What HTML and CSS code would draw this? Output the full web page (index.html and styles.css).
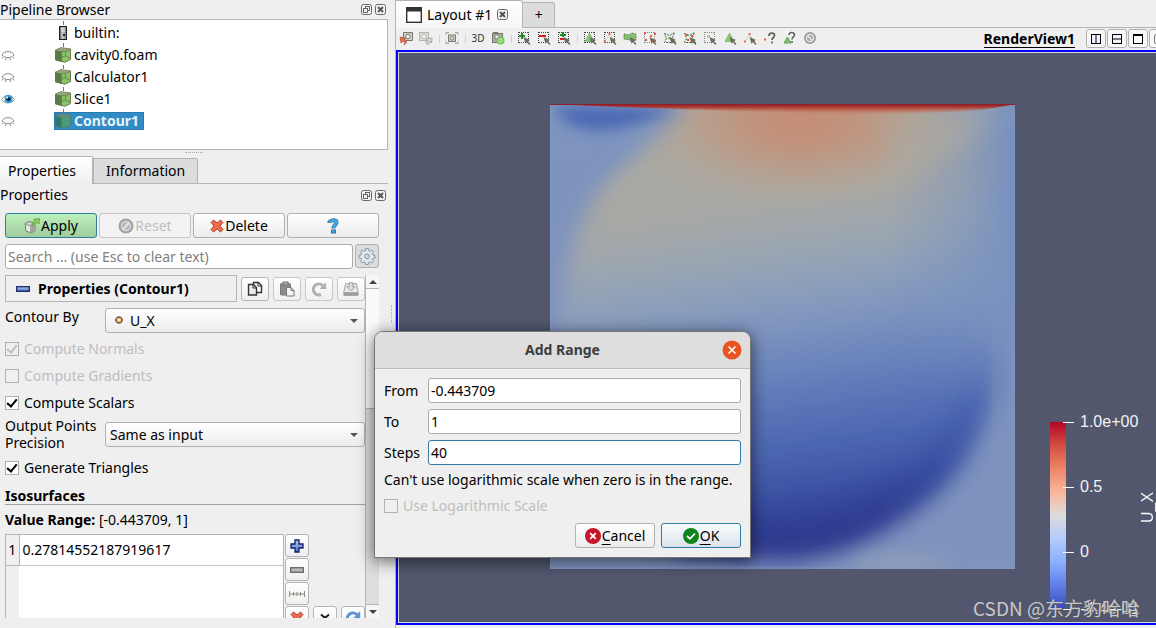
FILE: index.html
```html
<!DOCTYPE html>
<html lang="en">
<head>
<meta charset="utf-8">
<title>ParaView - Add Range</title>
<link rel="stylesheet" href="styles.css">
</head>
<body>
<svg class="defs" width="0" height="0" aria-hidden="true">
  <defs>
    <linearGradient id="steel" x1="0" x2="1"><stop offset="0" stop-color="#555"/><stop offset=".4" stop-color="#ccc"/><stop offset="1" stop-color="#777"/></linearGradient>
    <linearGradient id="blueFill" x1="0" y1="0" x2="0" y2="1"><stop offset="0" stop-color="#b4c6f0"/><stop offset="1" stop-color="#4a6ecb"/></linearGradient>
    <symbol id="i-float" viewBox="0 0 11 11"><rect x=".5" y=".5" width="10" height="10" rx="2" fill="#f4f4f4" stroke="#666"/><rect x="4.5" y="2.5" width="4" height="4" fill="none" stroke="#666"/><rect x="2.5" y="4.500" width="4" height="4" fill="#f4f4f4" stroke="#666"/></symbol>
    <symbol id="i-close" viewBox="0 0 11 11"><rect x=".5" y=".5" width="10" height="10" rx="2" fill="#f4f4f4" stroke="#666"/><path d="M3 3l5 5M8 3l-5 5" stroke="#555" stroke-width="2"/></symbol>
    <symbol id="i-server" viewBox="0 0 16 16"><rect x="4.500" y="1.500" width="7" height="13" fill="url(#steel)" stroke="#222"/><path d="M6 4h4M6 6h4" stroke="#eee"/><rect x="8" y="9" width="2" height="2" fill="#222"/></symbol>
    <symbol id="i-cube" viewBox="0 0 16 16"><path d="M.5 3L6 .7l9.500 1.300v10.500L10 15.300.5 13z" fill="#89c269" stroke="#6e7a52"/><path d="M.5 3l6 1.700v10L.5 13z" fill="#5b7b46"/><path d="M.5 3l6-2.300 9 1.500-5 2.500z" fill="#97a17b"/><path d="M6.500 4.700h4l5-2.500M6.500 4.700v9.500M7 10l3.500-1 4.500 2M10.500 5v4" stroke="#667a4b" stroke-width=".8" fill="none"/></symbol>
    <symbol id="i-cube-sel" viewBox="0 0 16 16"><path d="M.5 3L6 .7l9.500 1.300v10.500L10 15.300.5 13z" fill="#469b78" stroke="#53786f"/><path d="M.5 3l6 1.700v10L.5 13z" fill="#357865"/><path d="M.5 3l6-2.300 9 1.500-5 2.500z" fill="#648983"/></symbol>
    <symbol id="i-shut" viewBox="0 0 14 12"><path d="M1 6C3 1.500 11 1.500 13 6M1 6c3 3.500 9 3.500 12 0M2 8l-1 1.500M5 9l-.5 2M9 9l.5 2M12 8l1 1.500" fill="none" stroke="#888"/></symbol>
    <symbol id="i-eye" viewBox="0 0 14 12"><path d="M.5 6.500C4 1 10 1 13.500 6.500 10 11 4 11 .5 6.500z" fill="#fff" stroke="#8a8f92"/><circle cx="7.500" cy="6" r="4" fill="#2a9ddb"/><circle cx="7.500" cy="6" r="2" fill="#0a1a2a"/><circle cx="6.300" cy="4.500" r="1" fill="#fff"/></symbol>
    <symbol id="i-apply" viewBox="0 0 16 16"><path d="M1 5.500L5 3.500l6 1.500v7.500L7 15l-5-2z" fill="#cfd3c6" stroke="#777d70"/><path d="M1 5.500l5 1.500 5-2v7.500L6.500 15z" fill="#a3a79b"/><path d="M2 7l4 1.500v5l-3.500-1z" fill="#e8eae2"/><path d="M8 8c0-3 1-4.500 3-5L9.500 1.500l6-1L15 6l-1.500-1.500C11.500 5 10.500 6 8 8z" fill="#8fd05c" stroke="#5a9136" stroke-width=".7"/></symbol>
    <symbol id="i-forbid" viewBox="0 0 16 16"><circle cx="8" cy="8" r="7.500" fill="#a2a2a2"/><circle cx="8" cy="8" r="4.500" fill="#b5b5b5" stroke="#dcdcdc" stroke-width="1.300"/><path d="M5 11l6-6" stroke="#e6e6e6" stroke-width="2"/></symbol>
    <symbol id="i-redx" viewBox="0 0 14 14"><path d="M3.500 1L7 4l3.500-3L13 3.500 10 7l3 3.500-2.500 2.500L7 10l-3.500 3L1 10.500 4 7 1 3.500z" fill="#f4694a" stroke="#a74635"/></symbol>
    <symbol id="i-help" viewBox="0 0 12 16"><path d="M2.500 5V4C4.500 1.500 9.500 1.500 9.500 4.500c0 2.500-3.200 2.500-3.200 6" fill="none" stroke="#4d6f88" stroke-width="4"/><path d="M2.500 4.500C4.500 1.500 9.500 1.500 9.500 4.500c0 2.500-3.200 2.500-3.200 5.500" fill="none" stroke="#3aa9ee" stroke-width="2.500"/><rect x="4.500" y="12" width="4" height="3" fill="#3aa9ee" stroke="#4d6f88"/></symbol>
    <symbol id="i-gear" viewBox="0 0 18 18"><path d="M7.700 1.500h2.600l.4 2.200 1.300.6 1.900-1.300 1.700 1.900-1.300 1.800.6 1.300 2.100.4v2.400l-2.200.5-.6 1.200 1.300 1.900-1.800 1.700-1.800-1.200-1.300.5-.4 2.100H7.600l-.4-2.200-1.300-.5-1.800 1.200-1.700-1.700 1.200-1.900-.6-1.200-2-.5V8.300l2.100-.4.5-1.300L2.500 4.700 4.300 3l1.800 1.200 1.200-.5z" fill="#dfe8ef" stroke="#7f8b97" stroke-width=".9"/><circle cx="9" cy="9.300" r="2.400" fill="#cfd6dc" stroke="#8793a0"/></symbol>
    <symbol id="i-copy" viewBox="0 0 16 16"><path d="M6.500 1.500h5l3 3v7h-8z" fill="#fff" stroke="#333" stroke-width="1.400"/><path d="M11 1.500v3.500h3.500" fill="none" stroke="#333"/><path d="M1.500 3.500h5l3 3v7.500h-8z" fill="#e9e9e9" stroke="#333" stroke-width="1.400"/><path d="M6 3.500v3.500h3.500" fill="none" stroke="#333"/></symbol>
    <symbol id="i-paste" viewBox="0 0 16 16"><rect x="1.500" y="2.500" width="10" height="11.500" rx="1" fill="#8d8d8d" stroke="#777"/><rect x="4" y="1" width="5" height="3" fill="#aaa" stroke="#777"/><path d="M7.500 6.500h4.500l3 3v5.500h-7.500z" fill="#f6f6f6" stroke="#777"/><path d="M12 6.500v3h3" fill="none" stroke="#777"/></symbol>
    <symbol id="i-redo" viewBox="0 0 16 16"><path d="M12.500 5.500A5.500 5.500 0 1 0 10 13.500" fill="none" stroke="currentColor" stroke-width="3"/><path d="M15.200 1v7H8.500z" fill="currentColor"/></symbol>
    <symbol id="i-save" viewBox="0 0 18 16"><path d="M3 2h12l2 9v4H1v-4z" fill="#e8e8e8" stroke="#999"/><rect x="1" y="11.500" width="16" height="4" fill="#9d9d9d"/><path d="M7 1h4v4.500h2.500L9 10 4.500 5.500H7z" fill="#ddd" stroke="#999"/></symbol>
    <symbol id="i-plus" viewBox="0 0 14 14"><path d="M5 1h4v4h4v4H9v4H5V9H1V5h4z" fill="url(#blueFill)" stroke="#10206a" stroke-width="1.300"/></symbol>
    <symbol id="i-minus" viewBox="0 0 14 6"><rect x=".7" y=".7" width="12.600" height="4.600" fill="#b9b9b9" stroke="#666" stroke-width="1.300"/></symbol>
    <symbol id="i-fold" viewBox="0 0 14 6"><rect x=".7" y=".7" width="12.600" height="4.600" fill="url(#blueFill)" stroke="#17266b" stroke-width="1.300"/></symbol>
    <symbol id="i-range" viewBox="0 0 16 8"><path d="M.5 1v6M15.500 1v6M.5 4h15M4.500 2v4M8 2v4M11.500 2v4" fill="none" stroke="#8d8d80"/></symbol>
    <symbol id="i-point" viewBox="0 0 8 8"><path d="M2.500 1h3L7 2.500v3L5.500 7h-3L1 5.500v-3z" fill="#f9b06a" stroke="#2b1c10"/><rect x="3" y="3" width="2" height="2" fill="#fff0dc"/></symbol>
    <symbol id="i-cam" viewBox="0 0 16 16"><path d="M5.500 2.500h9v8h-9z" fill="#cfcfc4" stroke="#77776e"/><circle cx="10" cy="6.500" r="2.200" fill="#fff" stroke="#77776e"/></symbol>
    <symbol id="i-camframe" viewBox="0 0 16 16"><path d="M2 5V2.500h3M11 2.500h3V5M14 11v2.500h-3M5 13.500H2V11" fill="none" stroke="#a0a090"/><rect x="4.500" y="5" width="7" height="6.500" fill="#d3d3ca" stroke="#7c7c70"/><circle cx="8" cy="8.500" r="1.700" fill="#eee" stroke="#77776e"/></symbol>
    <symbol id="i-dots" viewBox="0 0 16 16"><path d="M2.500 2v11M12.500 2v11M3 2.500h10M3 12.500h10" fill="none" stroke="#444" stroke-dasharray="1 1"/></symbol>
    <symbol id="i-cursor" viewBox="0 0 16 16"><path d="M7.500 7l6.500 3-2 1 2.500 3-1.300 1L11 12l-1.500 1.700z" fill="#6d6b5c"/></symbol>
    <symbol id="i-tri" viewBox="0 0 16 16"><path d="M7.500 3l4.500 8.500H3z" fill="#86cb70" stroke="#7fae70" stroke-width=".7"/></symbol>
    <symbol id="i-tripts" viewBox="0 0 16 16"><path d="M7.500 4l-4.500 7.500M7.500 4l4.500 7.500" stroke="#b9b9ac" stroke-dasharray="1 1"/><path d="M6.500 3h2v2h-2zM2 10.500h2v2H2zM11 10.500h2v2h-2z" fill="#ef6a50"/></symbol>
    <symbol id="i-poly" viewBox="0 0 16 16"><path d="M2.500 3.500l5 2 5-3-2 5 3 5h-11l2-4z" fill="none" stroke="#3f6b3f" stroke-dasharray="2 1"/></symbol>
  </defs>
</svg>

<div class="app">
  <aside class="sidebar">
    <header class="dock-title">
      <span>Pipeline Browser</span>
      <span class="dock-tools"><button aria-label="Float"><svg><use href="#i-float"/></svg></button><button aria-label="Close"><svg><use href="#i-close"/></svg></button></span>
    </header>
    <ul class="tree">
      <li><span class="vis"></span><span class="node"><svg><use href="#i-server"/></svg>builtin:</span></li>
      <li><svg class="vis"><use href="#i-shut"/></svg><span class="node"><svg><use href="#i-cube"/></svg>cavity0.foam</span></li>
      <li><svg class="vis"><use href="#i-shut"/></svg><span class="node"><svg><use href="#i-cube"/></svg>Calculator1</span></li>
      <li><svg class="vis"><use href="#i-eye"/></svg><span class="node"><svg><use href="#i-cube"/></svg>Slice1</span></li>
      <li><svg class="vis"><use href="#i-shut"/></svg><span class="node selected"><svg><use href="#i-cube-sel"/></svg>Contour1</span></li>
    </ul>
    <div class="grip"></div>
    <nav class="dock-tabs">
      <button class="tab active">Properties</button><button class="tab">Information</button>
    </nav>
    <header class="dock-title second">
      <span>Properties</span>
      <span class="dock-tools"><button aria-label="Float"><svg><use href="#i-float"/></svg></button><button aria-label="Close"><svg><use href="#i-close"/></svg></button></span>
    </header>
    <div class="actions">
      <button class="btn apply"><svg><use href="#i-apply"/></svg>Apply</button>
      <button class="btn" disabled><svg><use href="#i-forbid"/></svg>Reset</button>
      <button class="btn"><svg class="s14"><use href="#i-redx"/></svg>Delete</button>
      <button class="btn" aria-label="Help"><svg><use href="#i-help"/></svg></button>
    </div>
    <div class="search">
      <input type="text" placeholder="Search ... (use Esc to clear text)" aria-label="Search">
      <button class="gear" aria-label="Advanced"><svg><use href="#i-gear"/></svg></button>
    </div>
    <div class="scroll">
      <div class="props">
        <div class="section-row">
          <button class="section"><svg><use href="#i-fold"/></svg>Properties (Contour1)</button>
          <button class="sq" aria-label="Copy"><svg><use href="#i-copy"/></svg></button>
          <button class="sq" aria-label="Paste" disabled><svg><use href="#i-paste"/></svg></button>
          <button class="sq" aria-label="Restore" disabled><svg><use href="#i-redo"/></svg></button>
          <button class="sq" aria-label="Save" disabled><svg><use href="#i-save"/></svg></button>
        </div>
        <div class="field first">
          <label for="by">Contour By</label>
          <span class="combo point"><select id="by"><option>U_X</option></select><svg><use href="#i-point"/></svg></span>
        </div>
        <label class="check off"><input type="checkbox" checked disabled>Compute Normals</label>
        <label class="check off"><input type="checkbox" disabled>Compute Gradients</label>
        <label class="check"><input type="checkbox" checked>Compute Scalars</label>
        <div class="field">
          <label for="prec">Output Points Precision</label>
          <span class="combo"><select id="prec"><option>Same as input</option></select></span>
        </div>
        <label class="check last"><input type="checkbox" checked>Generate Triangles</label>
        <h3>Isosurfaces</h3>
        <p class="range"><b>Value Range:</b> [-0.443709, 1]</p>
        <div class="values">
          <div class="table-box">
            <table><tbody><tr><th scope="row">1</th><td>0.27814552187919617</td></tr></tbody></table>
          </div>
          <div class="value-tools">
            <button class="sm" aria-label="Add value"><svg class="s14"><use href="#i-plus"/></svg></button>
            <button class="sm" aria-label="Remove value" disabled><svg class="s14"><use href="#i-minus"/></svg></button>
            <button class="sm" aria-label="Add range"><svg><use href="#i-range"/></svg></button>
            <div class="last-tools">
              <button class="sm" aria-label="Remove all"><svg class="s14"><use href="#i-redx"/></svg></button>
              <button class="sm" aria-label="Menu"><svg viewBox="0 0 16 16"><path d="M4 4.500l4 3.500 4-3.500M5 12l3-4 3 4" fill="none" stroke="#222" stroke-width="2"/></svg></button>
              <button class="sm blue" aria-label="Reset values"><svg><use href="#i-redo"/></svg></button>
            </div>
          </div>
        </div>
      </div>
      <div class="scrollbar"><span class="up"></span><span class="thumb"></span><span class="track"></span><span class="down"></span></div>
    </div>
  </aside>
  <div class="splitter"></div>

  <main class="views">
    <nav class="layout-tabs">
      <button class="ltab active"><svg class="win" viewBox="0 0 16 16"><rect x=".7" y=".7" width="14.600" height="14.600" fill="#fff" stroke="#333" stroke-width="1.400"/><rect width="16" height="4.500" fill="#333"/></svg>Layout #1<svg class="x"><use href="#i-close"/></svg></button><button class="ltab add">+</button>
    </nav>
    <div class="toolbar">
      <button aria-label="Undo camera"><svg><use href="#i-cam"/><path d="M2 7l6 1-1.500 1.500C9 10 9.500 13 6 15c1-2.500.5-3.500-1.500-3.500L3 13z" fill="#e2704f" stroke="#a9472d" stroke-width=".6"/></svg></button>
      <button aria-label="Redo camera"><svg><g opacity=".5"><use href="#i-cam" x="-4"/><path d="M14 8l-6 1 1.500 1.500C7 11 7.500 13 10 15c0-2 0-3 2-3l1.500 1z" fill="#bbb" stroke="#666"/></g></svg></button>
      <i class="sep"></i>
      <button aria-label="Capture"><svg><use href="#i-camframe"/></svg></button>
      <i class="sep"></i>
      <button class="t3d">3D</button>
      <button aria-label="Adjust camera"><svg><rect x="2.500" y="3.500" width="10" height="9" fill="#a9ac9e" stroke="#77776a"/><path d="M3 2.500h5" stroke="#77776a"/><circle cx="7" cy="7" r="2.300" fill="#eee" stroke="#777"/><circle cx="10.500" cy="10.500" r="4" fill="#72c653"/><circle cx="10.500" cy="10.500" r="1.700" fill="none" stroke="#e9f7e2"/></svg></button>
      <i class="sep"></i>
      <button aria-label="Add selection"><svg><use href="#i-dots"/><path d="M3 6h6M6 3v6" stroke="#1d8a26" stroke-width="2"/><use href="#i-cursor"/></svg></button>
      <button aria-label="Subtract selection"><svg><use href="#i-dots"/><path d="M3 6h7" stroke="#e01818" stroke-width="2"/><use href="#i-cursor"/></svg></button>
      <button aria-label="Toggle selection"><svg><use href="#i-dots"/><path d="M4 5h6M7 2v5" stroke="#1d8a26" stroke-width="2"/><path d="M4 9h6" stroke="#e01818" stroke-width="2"/><use href="#i-cursor"/></svg></button>
      <i class="sep"></i>
      <button aria-label="Select cells"><svg><use href="#i-dots"/><use href="#i-tri"/><use href="#i-cursor"/></svg></button>
      <button aria-label="Select points"><svg><use href="#i-dots"/><use href="#i-tripts"/><use href="#i-cursor"/></svg></button>
      <button aria-label="Select cells through"><svg><path d="M2 4l5 1 3-2 4 1v6l-4 1-2-1-6-1z" fill="#86c26c" stroke="#5c8d50" stroke-dasharray="2 1"/><use href="#i-cursor"/></svg></button>
      <button aria-label="Select points through"><svg><use href="#i-dots" opacity=".6"/><path d="M2 2h2v2H2zM8 5h2v2H8zM3 9h2v2H3zM12 3h2v2h-2zM12 10h2v2h-2z" fill="#ee5a40"/><use href="#i-cursor"/></svg></button>
      <button aria-label="Polygon cells"><svg><use href="#i-poly"/><path d="M5 9l3-3 3 4z" fill="#7fc36a"/><use href="#i-cursor"/></svg></button>
      <button aria-label="Polygon points"><svg><use href="#i-poly"/><path d="M4 4h2v2H4zM9 5h2v2H9zM5 9h2v2H5zM9 10h2v2H9z" fill="#ee4a30"/><use href="#i-cursor"/></svg></button>
      <button aria-label="Select block"><svg><g opacity=".6"><use href="#i-dots"/><path d="M5 5h3v3H5zM8 8h3v3H8z" fill="#8db98a"/></g><use href="#i-cursor"/></svg></button>
      <button aria-label="Interactive cells"><svg><use href="#i-tri"/><use href="#i-cursor"/></svg></button>
      <button aria-label="Interactive points"><svg><use href="#i-tripts"/><use href="#i-cursor"/></svg></button>
      <button class="q" aria-label="Hover points"><svg><path d="M2 8.500h2v2H2z" fill="#ee5a40"/><path d="M7 6c0-4 5.500-3.500 5.500-.5 0 2-2.500 2-2.500 4.500M10 11.500v2" fill="none" stroke="#66665a" stroke-width="1.800"/></svg></button>
      <button class="q" aria-label="Hover cells"><svg><path d="M5.500 7l3.500 6H2z" fill="#7fc36a" stroke="#6d9c5e"/><path d="M7 5c0-3.500 5.500-3 5.500 0 0 2-2.500 2-2.500 4.500M10 11v2" fill="none" stroke="#66665a" stroke-width="1.600"/></svg></button>
      <button aria-label="Clear selection"><svg><circle cx="8" cy="8" r="6" fill="#999"/><circle cx="8" cy="8" r="3.700" fill="#aaa" stroke="#e6e6e6" stroke-width="1.300"/><path d="M5.500 5.500l5 5" stroke="#e6e6e6" stroke-width="1.600"/></svg></button>
      <b class="view-name">RenderView1</b>
      <span class="view-tools">
        <button aria-label="Split horizontally"><svg viewBox="0 0 10 10"><rect x=".5" y=".5" width="9" height="9" fill="#eef2ff" stroke="#000"/><path d="M5 0v10" stroke="#000"/></svg></button>
        <button aria-label="Split vertically"><svg viewBox="0 0 10 10"><rect x=".5" y=".5" width="9" height="9" fill="#eef2ff" stroke="#000"/><path d="M0 5h10" stroke="#000"/></svg></button>
        <button aria-label="Maximize"><svg viewBox="0 0 10 10"><rect x=".5" y=".5" width="9" height="9" fill="#fff" stroke="#000"/><path d="M0 1h10" stroke="#000" stroke-width="2"/></svg></button>
        <button aria-label="Close view"><svg><use href="#i-close"/></svg></button>
      </span>
    </div>
    <section class="render">
      <svg class="plot" viewBox="0 0 464 464">
        <defs>
          <clipPath id="box"><rect width="464" height="464"/></clipPath>
          <linearGradient id="body" gradientUnits="userSpaceOnUse" x1="205" y1="0" x2="265" y2="440">
            <stop offset="0" stop-color="#aaa9a3"/><stop offset=".18" stop-color="#aaa9a3"/><stop offset=".26" stop-color="#a5a8a8"/><stop offset=".33" stop-color="#9ba6b1"/><stop offset=".43" stop-color="#8a9ebb"/><stop offset=".5" stop-color="#7e95bf"/><stop offset=".6" stop-color="#6a84bc"/><stop offset=".7" stop-color="#5872b7"/><stop offset=".8" stop-color="#4862ae"/><stop offset=".9" stop-color="#394c9f"/><stop offset=".98" stop-color="#2e3a8d"/><stop offset="1" stop-color="#2e3a8e"/>
          </linearGradient>
          <linearGradient id="fadeR" x1="0" x2="1"><stop offset="0" stop-color="#7992bf" stop-opacity="0"/><stop offset=".6" stop-color="#7992bf" stop-opacity=".5"/><stop offset="1" stop-color="#7892bf"/></linearGradient>
          <linearGradient id="down" x1="0" x2="0" y1="0" y2="1"><stop offset=".6" stop-color="#fff"/><stop offset="1" stop-color="#000"/></linearGradient>
          <mask id="fadeDown"><rect x="300" width="164" height="300" fill="url(#down)"/></mask>
          <linearGradient id="crescent" gradientUnits="userSpaceOnUse" x1="430" y1="250" x2="350" y2="400"><stop offset="0" stop-color="#3a52a6" stop-opacity="0"/><stop offset=".5" stop-color="#3650a4" stop-opacity=".5"/><stop offset="1" stop-color="#2d3a90" stop-opacity=".6"/></linearGradient>
          <radialGradient id="hot"><stop offset="0" stop-color="#c48d76"/><stop offset=".25" stop-color="#c1927c"/><stop offset=".55" stop-color="#ba9d89" stop-opacity=".85"/><stop offset=".8" stop-color="#b3a597" stop-opacity=".45"/><stop offset="1" stop-color="#aca99f" stop-opacity="0"/></radialGradient>
          <linearGradient id="lid" x1="0" y1="0" x2="0" y2="1"><stop offset="0" stop-color="#921a26"/><stop offset=".3" stop-color="#a8382f"/><stop offset="1" stop-color="#c47a62" stop-opacity="0"/></linearGradient>
          <filter id="b2" filterUnits="userSpaceOnUse" x="-60" y="-60" width="600" height="600"><feGaussianBlur stdDeviation="2"/></filter>
          <filter id="b7" filterUnits="userSpaceOnUse" x="-60" y="-60" width="600" height="600"><feGaussianBlur stdDeviation="7"/></filter>
          <filter id="b11" filterUnits="userSpaceOnUse" x="-60" y="-60" width="600" height="600"><feGaussianBlur stdDeviation="11"/></filter>
        </defs>
        <g clip-path="url(#box)">
          <rect width="464" height="464" fill="#7e93be"/>
          <path d="M150-40L132 10C116 28 102 36 94 41 82 50 72 60 64 68 52 82 46 92 40 102 32 116 26 130 23 143 16 165 12 190 8 240L20 330 60 400 130 450 231 456C260 455 289 448 328 428 350 415 370 402 386 387 404 370 416 352 424 336 438 312 444 290 449 270L456 200V-40z" fill="url(#body)" filter="url(#b11)"/>
          <path d="M436 240C426 300 412 325 397 346 380 368 365 380 347 390 325 405 310 413 289 421 265 428 250 429 180 428" fill="none" stroke="url(#crescent)" stroke-width="28" filter="url(#b11)"/>
          <rect x="340" width="124" height="300" fill="url(#fadeR)" mask="url(#fadeDown)"/>
          <ellipse cx="250" cy="18" rx="175" ry="88" fill="url(#hot)"/>
          <path d="M340 12C380 12 420 10 450 2L436 20C410 46 380 66 340 80z" fill="#abaaa3" opacity=".5" filter="url(#b11)"/>
          <path d="M-20-20H140L122 14C104 32 80 46 56 60L-20 70z" fill="#7e95c0" opacity=".7" filter="url(#b11)"/>
          <path d="M4 4C40 2 90 3 128 6 100 14 84 24 50 26 24 26 12 16 4 4z" fill="#4868b4" filter="url(#b7)"/>
          <ellipse cx="350" cy="458" rx="50" ry="10" fill="#95a4b6" opacity=".55" filter="url(#b7)"/>
          <path d="M0-5C100 2 180 4 240 6S400 10 460-3z" fill="#bf6650" opacity=".9" filter="url(#b2)"/>
          <path d="M0 0H464C430 8 380 10 300 9S80 4 0 0z" fill="url(#lid)"/>
          <path d="M0 .5h464" stroke="#8f1f2c"/>
          <path d="M464 2C460 12 452 24 445 32V464" fill="none" stroke="#7f97bd" stroke-opacity=".25" stroke-width="6" filter="url(#b2)"/>
          <path d="M463 4v459H1V4" fill="none" stroke="#86a0c4" stroke-opacity=".5"/>
        </g>
      </svg>
      <div class="legend">
        <div class="bar"></div>
        <div class="ticks"><span>1.0e+00</span><span>0.5</span><span>0</span><span>-4.4e-01</span></div>
        <div class="axis">U_X</div>
      </div>
      <div class="watermark">CSDN @东方豹哈哈</div>
    </section>
  </main>
</div>

<form class="dialog" role="dialog" aria-labelledby="dlg">
  <header><h2 id="dlg">Add Range</h2><button type="button" class="round" aria-label="Close"><svg viewBox="0 0 20 20"><circle cx="10" cy="10" r="9.500" fill="#e95420"/><path d="M6.500 6.500l7 7M13.500 6.500l-7 7" stroke="#fff" stroke-width="1.500"/></svg></button></header>
  <div class="body">
    <div class="grid">
      <label for="from">From</label><input id="from" type="text" value="-0.443709">
      <label for="to">To</label><input id="to" type="text" value="1">
      <label for="steps">Steps</label><input id="steps" class="focus" type="text" value="40">
    </div>
    <p>Can't use logarithmic scale when zero is in the range.</p>
    <label class="check off"><input type="checkbox" disabled>Use Logarithmic Scale</label>
    <div class="buttons">
      <button type="button" class="btn"><svg viewBox="0 0 16 16"><circle cx="8" cy="8" r="8" fill="#c7162b"/><path d="M5.200 5.200l5.600 5.600M10.800 5.200l-5.600 5.600" stroke="#fff" stroke-width="1.800"/></svg><span><u>C</u>ancel</span></button>
      <button type="button" class="btn ok"><svg viewBox="0 0 16 16"><circle cx="8" cy="8" r="8" fill="#0e8420"/><path d="M4 8l3 2.800L12 5.500" fill="none" stroke="#fff" stroke-width="1.800"/></svg><span><u>O</u>K</span></button>
    </div>
  </div>
</form>
</body>
</html>
```
FILE: styles.css
```css
* { box-sizing: border-box; }
body { margin: 0; background: #efefef; color: #000; font: 14px/18px "Noto Sans", "Open Sans", sans-serif; overflow: hidden; }
button, input, select { font: inherit; color: inherit; margin: 0; padding: 0; }
button { border: 0; background: none; }
svg { width: 16px; height: 16px; flex: none; display: block; }
svg.s14 { width: 14px; height: 14px; }
.defs { position: absolute; width: 0; height: 0; }
.app { display: flex; height: 100vh; }

.sidebar { width: 388px; flex: none; display: flex; flex-direction: column; padding-bottom: 10px; }
.dock-title { display: flex; justify-content: space-between; align-items: center; height: 19px; flex: none; padding-right: 2px; }
.dock-title.second { height: 22px; margin-bottom: 7px; }
.dock-tools { display: flex; gap: 3px; }
.dock-tools svg { width: 11px; height: 11px; }
.tree { list-style: none; margin: 0; padding: 2px 0 0; height: 131px; flex: none; background: #fff; border: 1px solid #b4b4b4; border-left: 0; }
.tree li { display: flex; align-items: center; height: 22px; }
.vis { width: 14px; height: 12px; margin: 0 39px 0 1px; flex: none; }
.node { display: flex; align-items: center; gap: 3px; height: 18px; padding: 0 5px 0 1px; position: relative; }
.node::before { content: ""; position: absolute; left: 9px; top: -3px; height: 4px; border-left: 1px solid #777; }
.node.selected { background: #308cc6; color: #e8f2fa; font-weight: bold; outline: 1px solid #2a7ab0; outline-offset: -1px; }
.grip { height: 6px; flex: none; }
.grip::after { content: ""; display: block; width: 18px; margin: 2px auto 0; border-top: 1px dotted #aaa; }
.dock-tabs { display: flex; align-items: flex-end; height: 28px; flex: none; border-bottom: 1px solid #b4b4b4; }
.tab { height: 25px; padding: 0 12px; background: #dcdcdc; border: 1px solid #b4b4b4; border-bottom: 0; border-radius: 0 2px 0 0; }
.tab.active { height: 28px; margin-bottom: -1px; padding: 0 16px 0 8px; background: linear-gradient(#fff, #efefef); border-left: 0; }
.actions { display: grid; grid-template-columns: repeat(4, 1fr); gap: 2px; padding: 0 9px 0 5px; margin-bottom: 6px; flex: none; }
.btn { display: flex; align-items: center; justify-content: center; gap: 1px; height: 25px; border: 1px solid #b0b0b0; border-radius: 3px; background: linear-gradient(#fff, #ececec); }
.btn:disabled { color: #bebebe; border-color: #c6c6c6; background: #f2f2f2; }
.btn.apply { background: linear-gradient(#bdf0bd, #a0cc9e); border-color: #2e7f9e; }
.search { display: flex; gap: 2px; padding: 0 9px 0 5px; margin-bottom: 6px; flex: none; }
input[type="text"] { height: 25px; min-width: 0; flex: 1; padding: 0 2px; border: 1px solid #ababab; border-radius: 3px; background: #fff; }
input::placeholder { color: #808080; opacity: 1; }
.gear { width: 24px; height: 24px; display: grid; place-items: center; background: #dcdcdc; border: 1px solid #b0b0b0; border-radius: 3px; }
.gear svg { width: 18px; height: 18px; }
.scroll { display: flex; flex: 1; min-height: 0; padding-right: 9px; }
.props { flex: 1; min-width: 0; padding-left: 5px; overflow: hidden; display: flex; flex-direction: column; }
.section-row { display: flex; gap: 4px; align-items: center; flex: none; height: 27px; }
.section { flex: 1; height: 27px; display: flex; align-items: center; gap: 8px; padding-left: 10px; font-weight: bold; border: 1px solid #b4b4b4; white-space: nowrap; }
.section svg { width: 14px; height: 6px; }
.sq { width: 28px; height: 24px; display: grid; place-items: center; border: 1px solid #b4b4b4; border-radius: 3px; background: linear-gradient(#fff, #efefef); color: #b0b0b0; }
.sq:disabled { border-color: #c8c8c8; }
.field { display: grid; grid-template-columns: 100px 1fr; align-items: center; line-height: 17px; flex: none; height: 36px; }
.field.first { height: 31px; margin-bottom: 2px; align-items: end; }
.field.first label { padding-bottom: 8px; }
.combo { position: relative; display: block; height: 25px; }
.combo select { appearance: none; width: 100%; height: 25px; padding: 0 20px 0 4px; border: 1px solid #b0b0b0; border-radius: 3px; background: linear-gradient(#fff, #ececec); }
.combo.point select { padding-left: 24px; }
.combo::after { content: ""; position: absolute; right: 7px; top: 11px; border: 4px solid transparent; border-top-color: #555; border-bottom: 0; }
.combo svg { position: absolute; left: 10px; top: 8px; width: 8px; height: 8px; pointer-events: none; }
.check { display: flex; align-items: center; gap: 5px; height: 27px; flex: none; }
.check.off { color: #bebebe; }
.check input { appearance: none; width: 14px; height: 14px; border: 1px solid #b0b0b0; background: #fff; display: grid; place-items: center; }
.check.off input { background: #efefef; }
.check input:checked::after { content: ""; width: 4px; height: 8px; border: solid currentColor; border-width: 0 2px 2px 0; transform: rotate(40deg); margin-bottom: 2px; }
.check.last { height: 31px; }
h3 { font: inherit; font-weight: bold; margin: 0; padding-top: 4px; height: 22px; border-bottom: 1px solid #a0a0a0; flex: none; }
.range { margin: 0; height: 29px; line-height: 30px; flex: none; }
.values { display: flex; flex: 1; min-height: 0; gap: 1px; }
.table-box { width: 279px; border: 1px solid #b4b4b4; border-bottom: 0; background: linear-gradient(to right, #efefef 13px, #fff 13px); }
table { border-collapse: collapse; width: 100%; }
th { width: 13px; height: 30px; padding: 0; font-weight: normal; background: #efefef; border-right: 1px solid #b4b4b4; border-bottom: 1px solid #b4b4b4; }
td { padding: 0 3px; border-bottom: 1px solid #c4c4c4; }
.value-tools { width: 24px; flex: none; }
.sm { width: 24px; height: 23px; margin-bottom: 1px; display: grid; place-items: center; border: 1px solid #b4b4b4; border-radius: 3px; background: linear-gradient(#fff, #efefef); flex: none; }
.last-tools { display: flex; gap: 4px; }
.sm.blue { color: #5b96d2; }
.scrollbar { width: 14px; flex: none; display: flex; flex-direction: column; border-left: 1px solid #b4b4b4; }
.scrollbar .up, .scrollbar .down { height: 13px; flex: none; display: grid; place-items: center; background: #f6f6f6; }
.up::after, .down::after { content: ""; border: 4px solid transparent; }
.up::after { border-bottom-color: #444; border-top: 0; }
.down::after { border-top-color: #444; border-bottom: 0; }
.thumb { flex: 38; background: #fafafa; border: solid #b4b4b4; border-width: 1px 0; }
.track { flex: 62; background: #dedede; border-bottom: 1px solid #b4b4b4; }
.splitter { width: 7px; flex: none; display: grid; align-items: center; justify-items: center; }
.splitter::after { content: ""; height: 18px; border-left: 1px dotted #aaa; }

.views { flex: 1; min-width: 0; display: flex; flex-direction: column; border-left: 1px solid #b4b4b4; padding-bottom: 3px; overflow: hidden; }
.layout-tabs { display: flex; align-items: flex-end; height: 28px; flex: none; border-bottom: 1px solid #b4b4b4; }
.ltab { height: 25px; width: 32px; background: #dcdcdc; border: 1px solid #b4b4b4; border-left: 0; border-bottom: 0; border-radius: 0 3px 0 0; }
.ltab.active { display: flex; align-items: center; gap: 5px; width: auto; height: 28px; margin-bottom: -1px; padding: 0 14px 0 10px; background: linear-gradient(#fff, #f6f6f6); border-top: 1px solid #b4b4b4; }
.ltab svg.x { width: 11px; height: 11px; }
.toolbar { display: flex; align-items: center; height: 22px; flex: none; }
.toolbar > button { width: 20px; height: 20px; display: grid; place-items: center; flex: none; margin-bottom: 2px; }
.toolbar > button svg { width: 16px; height: 16px; }
.toolbar .t3d { font-size: 10px; color: #333; }
.sep { width: 6px; flex: none; height: 8px; background: linear-gradient(to right, transparent 3px, #d0d0d0 3px, #d0d0d0 4px, transparent 4px); }
.view-name { margin-left: auto; margin-right: 11px; border-bottom: 1px solid #000; line-height: 17px; }
.view-tools { display: flex; gap: 1px; margin-right: -13px; margin-bottom: 1px; }
.view-tools button { width: 20px; height: 19px; display: grid; place-items: center; border: 1px solid #b0b0b0; border-radius: 3px; background: #f8f8f8; }
.view-tools svg { width: 10px; height: 10px; }
.render { flex: 1; min-height: 0; position: relative; overflow: hidden; border: 2px solid #0000fe; border-right: 0; box-shadow: inset 0 1px #d8d8d8, inset 1px 0 #d8d8d8, inset 0 -1px #d8d8d8; background: #52576e; }
.plot { position: absolute; left: 152px; top: 52px; width: 465px; height: 465px; }
.legend { position: absolute; left: 652px; top: 362px; display: flex; color: #f2f2f2; font: 16px/16px "Liberation Sans", sans-serif; }
.bar { width: 16px; height: 186px; margin-top: 8px; background: linear-gradient(#b40426, #d24b40 12%, #ee8468 25%, #f7b89c 38%, #dddcdc 50%, #b5cdfa 62%, #8db0fe 75%, #6282ea 87%, #3b4cc0); }
.ticks { display: flex; flex-direction: column; gap: 49px; width: 72px; margin-left: 2px; }
.ticks span { display: flex; align-items: center; gap: 6px; white-space: nowrap; }
.ticks span:last-child { margin-top: -8px; }
.ticks span::before { content: ""; flex: none; width: 11px; margin-left: -5px; border-top: 1px solid #fff; }
.axis { writing-mode: vertical-rl; transform: rotate(180deg); white-space: nowrap; height: 34px; margin-top: 75px; }
.watermark { position: absolute; right: 16px; bottom: 2px; color: #c6c8cf; font: 19px/26px "Noto Sans CJK SC", sans-serif; text-shadow: 1px 1px 1px #555; white-space: nowrap; }

.dialog { position: absolute; left: 375px; top: 332px; width: 375px; background: #efefef; border-radius: 8px 8px 0 0; box-shadow: 0 0 0 1px #777, 0 3px 16px 2px rgba(0, 0, 0, .55); }
.dialog header { display: flex; align-items: center; height: 37px; padding: 0 8px 0 28px; background: #dedede; border-bottom: 1px solid #bdbdbd; border-radius: 8px 8px 0 0; }
.dialog h2 { flex: 1; margin: 0; font: inherit; font-weight: bold; color: #3d3d3d; text-align: center; }
.round svg { width: 20px; height: 20px; }
.body { padding: 9px; }
.grid { display: grid; grid-template-columns: 38px 1fr; gap: 6px; align-items: center; }
input.focus { border-color: #2f7ea8; }
.body p { margin: 6px 0 5px; white-space: nowrap; }
.body .check { height: 24px; }
.buttons { display: flex; justify-content: flex-end; gap: 6px; margin-top: 5px; }
.buttons .btn { width: 80px; }
.buttons u { text-underline-offset: 3px; }
.btn.ok { border-color: #2f7ea8; background: linear-gradient(#fafcfe, #dbe3ea); }
```
